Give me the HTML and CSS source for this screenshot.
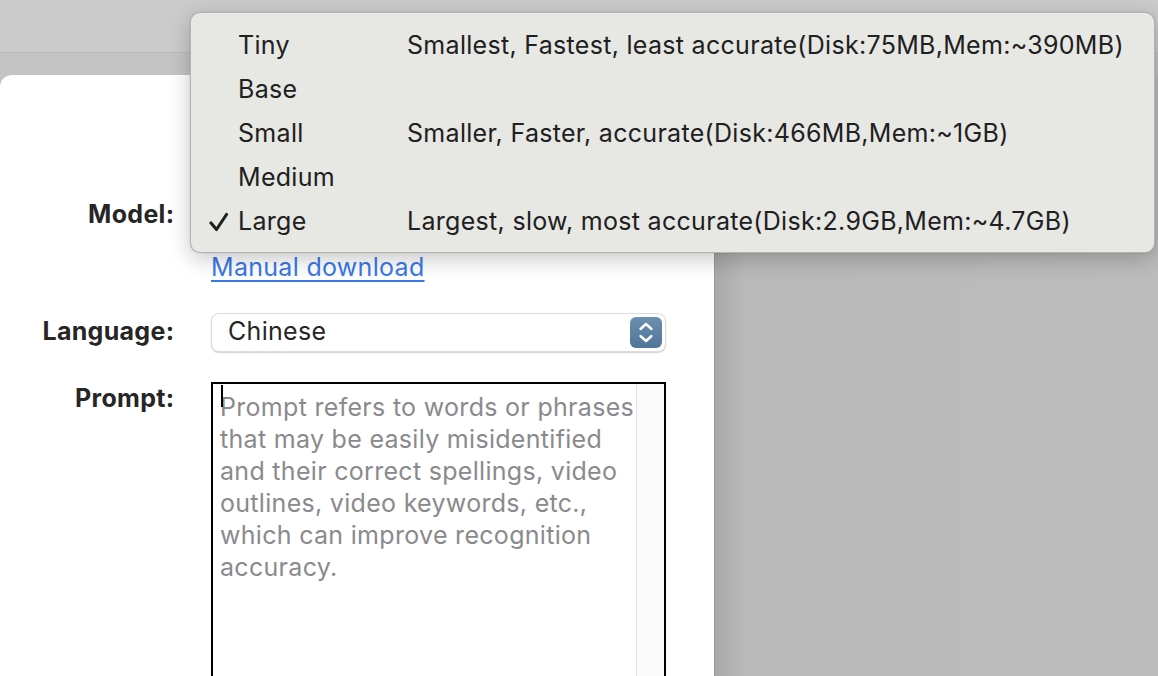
FILE: index.html
```html
<!DOCTYPE html>
<html lang="en">
<head>
<meta charset="utf-8">
<title>Model settings</title>
<link rel="stylesheet" href="styles.css">
</head>
<body>
<div class="window">
  <div class="titlebar"></div>
  <div class="strip"></div>
  <div class="content">
    <div class="panel">
      <div class="row row-model">
        <div class="label">Model:</div>
        <div class="field"><div class="select select-model"></div></div>
      </div>
      <div class="row row-link">
        <div class="label"></div>
        <div class="field"><a class="link" href="#">Manual download</a></div>
      </div>
      <div class="row row-lang">
        <div class="label">Language:</div>
        <div class="field">
          <div class="select">
            <span class="value">Chinese</span>
            <span class="stepper">
              <svg width="32" height="31" viewBox="0 0 32 31"><path d="M10.5 12 L16 7 L21.5 12" fill="none" stroke="#fff" stroke-width="2.4" stroke-linecap="round" stroke-linejoin="round"/><path d="M10.5 19 L16 24 L21.5 19" fill="none" stroke="#fff" stroke-width="2.4" stroke-linecap="round" stroke-linejoin="round"/></svg>
            </span>
          </div>
        </div>
      </div>
      <div class="row row-prompt">
        <div class="label">Prompt:</div>
        <div class="field">
          <div class="textarea">
            <div class="placeholder">Prompt refers to words or phrases<br>that may be easily misidentified<br>and their correct spellings, video<br>outlines, video keywords, etc.,<br>which can improve recognition<br>accuracy.</div>
            <div class="track"></div>
          </div>
        </div>
      </div>
    </div>
    <div class="rightpane"></div>
  </div>

  <div class="menu">
    <div class="item"><span class="check"></span><span class="name">Tiny</span><span class="desc">Smallest, Fastest, least accurate(Disk:75MB,Mem:~390MB)</span></div>
    <div class="item"><span class="check"></span><span class="name">Base</span><span class="desc"></span></div>
    <div class="item"><span class="check"></span><span class="name">Small</span><span class="desc">Smaller, Faster, accurate(Disk:466MB,Mem:~1GB)</span></div>
    <div class="item"><span class="check"></span><span class="name">Medium</span><span class="desc"></span></div>
    <div class="item"><span class="check"><svg width="20" height="20" viewBox="0 0 20 20"><path d="M2 11 L7.5 17.5 L17.5 2.5" fill="none" stroke="#1f1f1f" stroke-width="3.1" stroke-linecap="round" stroke-linejoin="round"/></svg></span><span class="name">Large</span><span class="desc">Largest, slow, most accurate(Disk:2.9GB,Mem:~4.7GB)</span></div>
  </div>
</div>
</body>
</html>
```

FILE: styles.css
```css
* { box-sizing: border-box; }
html, body { margin: 0; padding: 0; }
body {
  width: 1158px;
  height: 676px;
  overflow: hidden;
  font-family: Inter, "Liberation Sans", sans-serif;
  color: #262626;
  background: #c4c4c4;
}
.window {
  position: relative;
  width: 1158px;
  height: 676px;
  display: flex;
  flex-direction: column;
}
.titlebar {
  height: 53px;
  background: #cbcbcb;
  border-bottom: 1px solid #bcbcbc;
}
.strip {
  height: 22px;
  background: #c4c4c4;
}
.content {
  flex: 1;
  display: flex;
  min-height: 0;
}
.panel {
  width: 715px;
  background: #ffffff;
  border-top-left-radius: 12px;
  border-right: 1px solid #9c9c9c;
  padding-top: 119px;
  display: flex;
  flex-direction: column;
  overflow: hidden;
}
.rightpane {
  flex: 1;
  background: linear-gradient(90deg, #a9a9a9 0, #b9b9b9 30px, #bcbcbc 100%);
}
.row {
  display: grid;
  grid-template-columns: 174px 1fr;
  column-gap: 37px;
}
.label {
  text-align: right;
  font-weight: 700;
  font-size: 25px;
  letter-spacing: 0.3px;
  margin-right: -0.3px;
  color: #262626;
}
.row-model { height: 39px; align-items: center; }
.row-link { margin-top: 19px; height: 30px; }
.row-lang { margin-top: 31px; height: 39px; align-items: center; }
.row-lang .label { padding-bottom: 3px; }
.row-prompt { margin-top: 30px; }
.row-prompt .label { line-height: 32px; padding-top: 0; }

.select {
  width: 455px;
  height: 39px;
  background: #fff;
  border: 1px solid #dcdcdc;
  border-radius: 8px;
  box-shadow: 0 1px 1.5px rgba(0,0,0,0.18);
  display: flex;
  align-items: center;
  justify-content: space-between;
  padding: 0 3px 0 16px;
  font-size: 25px;
  letter-spacing: 0.3px;
  color: #262626;
}
.select .value { padding-bottom: 3px; }
.stepper {
  width: 32px;
  height: 31px;
  border-radius: 6px;
  background: linear-gradient(#6b8fb0, #4e7598);
  display: flex;
}
.link {
  font-size: 25px;
  letter-spacing: 0.3px;
  line-height: 30px;
  color: #3b78e7;
  text-decoration: underline;
  text-underline-offset: 4px;
  text-decoration-thickness: 2px;
}
.textarea {
  position: relative;
  width: 455px;
  height: 330px;
  border: 2px solid #000;
  display: flex;
}
.textarea::before {
  content: "";
  position: absolute;
  left: 8px;
  top: 1px;
  width: 2px;
  height: 22px;
  background: #000;
}
.placeholder {
  flex: 1;
  padding: 7px 0 0 7px;
  font-size: 25px;
  letter-spacing: 0.3px;
  line-height: 32px;
  color: #8a8a8e;
  white-space: nowrap;
}
.track {
  width: 28px;
  background: #fafafa;
  border-left: 1px solid #e4e4e4;
  position: relative;
  z-index: 1;
}

.menu {
  position: absolute;
  left: 190px;
  top: 12px;
  width: 965px;
  height: 241px;
  background: #e7e7e4;
  border: 1px solid rgba(0,0,0,0.22);
  border-radius: 10px;
  box-shadow: 0 6px 22px rgba(0,0,0,0.22), 0 0 2px rgba(0,0,0,0.15);
  padding-top: 10px;
}
.item {
  display: grid;
  grid-template-columns: 47px 169px 1fr;
  height: 44px;
  align-items: center;
  font-size: 25px;
  letter-spacing: 0.3px;
  color: #202020;
  white-space: nowrap;
}
.check {
  display: flex;
  justify-content: flex-end;
  padding-right: 9px;
  padding-top: 1px;
}
```
